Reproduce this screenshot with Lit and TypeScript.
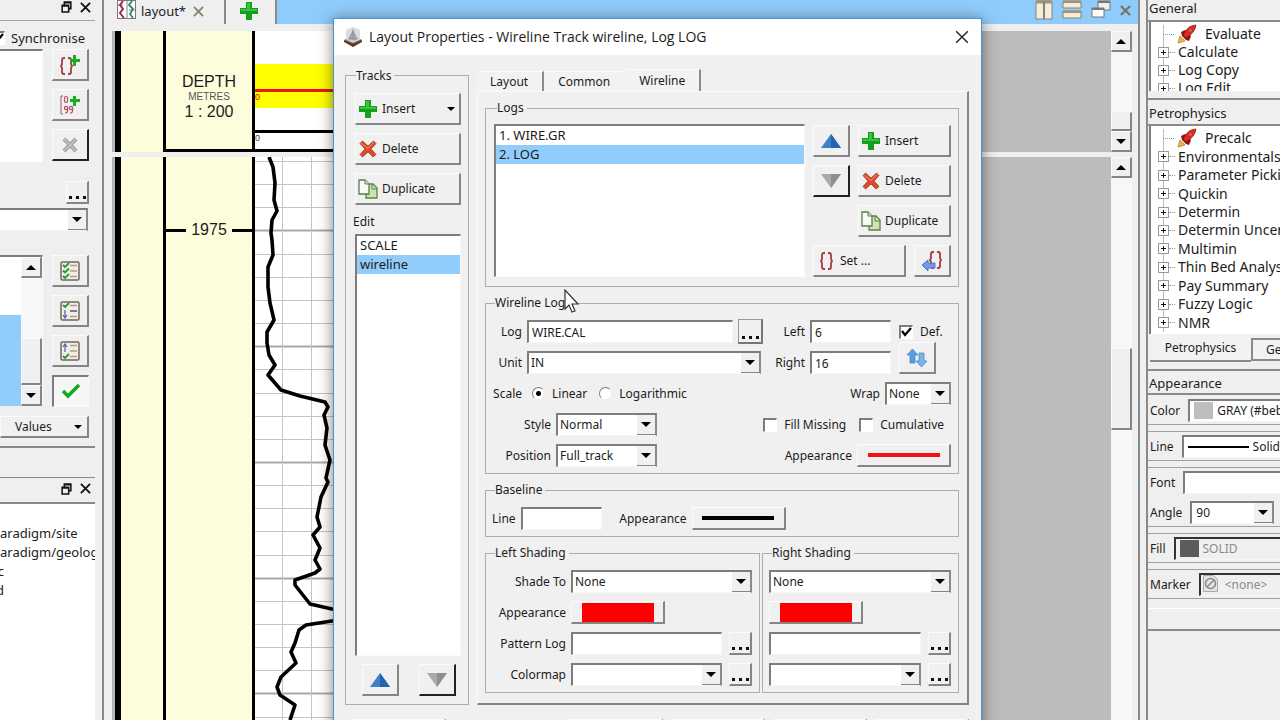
import { LitElement, html, css, svg, nothing, TemplateResult } from "lit";
import { customElement } from "lit/decorators.js";
import { classMap } from "lit/directives/class-map.js";

const plus = (s = 18) => html`<svg width=${s} height=${s} viewBox="0 0 18 18"><path d="M6 0h6v6h6v6h-6v6H6v-6H0V6h6z" fill="#13a01c"/><path d="M7 1h3v6h7v2H1V7h6z" fill="#3cc23f"/></svg>`;
const cross = html`<svg width="18" height="18" viewBox="0 0 18 18"><path d="M1 3.500 3.500 1 9 6l5.500-5L17 3.500 12 9l5 5.500-3 2.500-5-5-5.500 5L1 14.500 6 9z" fill="#dd4a2b" stroke="#a8381f" stroke-width=".8"/><path d="M2.500 3.500 9 8.500l5.500-6" stroke="#f0957a" fill="none"/></svg>`;
const pages = html`<svg width="20" height="20" viewBox="0 0 20 20"><path d="M8 5h7l4 4v10H8z" fill="#cfe3b0" stroke="#5d8448" stroke-width="1.300"/><path d="M14 5v5h5" fill="none" stroke="#5d8448"/><path d="M1 1h6l4 4v10H1z" fill="#f8fbf3" stroke="#5b7a52" stroke-width="1.300"/><path d="M7 1v4h4" fill="#dbe8ce" stroke="#5b7a52"/></svg>`;
const up = html`<svg width="20" height="14" viewBox="0 0 20 14"><path d="M10 0 20 14H0z" fill="#3b82c9"/><path d="M10 0 20 14H10z" fill="#2563ae"/></svg>`;
const down = html`<svg width="20" height="14" viewBox="0 0 20 14"><path d="M0 0h20L10 14z" fill="#a9a9a9"/><path d="M10 0h10L10 14z" fill="#8f8f8f"/></svg>`;
const bracePath = "M5 1H4Q2 1 2 3v4L1 9l1 2v4q0 2 2 2h1M8 1h1q2 0 2 2v4l1 2-1 2v4q0 2-2 2H8";
const braces = html`<svg width="13" height="18" viewBox="0 0 13 18"><path d=${bracePath} fill="none" stroke="#a83a42" stroke-width="1.800"/></svg>`;
const bracesPlus = html`<svg width="20" height="20" viewBox="0 0 20 20"><g transform="translate(0 2)"><path d=${bracePath} fill="none" stroke="#a83a42" stroke-width="1.800"/></g><path d="M13 0h3v4h4v3h-4v4h-3V7H10V4h3z" fill="#17ad22"/></svg>`;
const bracesArrow = html`<svg width="20" height="20" viewBox="0 0 20 20"><g transform="translate(7 0)"><path d=${bracePath} fill="none" stroke="#a83a42" stroke-width="1.800"/></g><path d="M0 14l6-5v3h7v5H6v3z" fill="#6f9bec" stroke="#4267c0" stroke-width=".8"/></svg>`;
const range = html`<svg width="20" height="20" viewBox="0 0 20 20"><path d="M3 1H1v18h2" fill="none" stroke="#b0525a"/><g fill="none" stroke="#b0525a" stroke-width="1.200"><rect x="4.500" y="1.500" width="3" height="6" rx="1.500"/><circle cx="6" cy="13" r="1.600"/><path d="M7.600 13v2.500q0 2.500-2.500 2.500"/><circle cx="11" cy="13" r="1.600"/><path d="M12.600 13v2.500q0 2.500-2.500 2.500"/></g><path d="M13 1h3v3h4v3h-4v4h-3V7h-3V4h3z" fill="#17ad22"/></svg>`;
const greyX = html`<svg width="16" height="16" viewBox="0 0 16 16"><path d="M2 2l12 12M14 2 2 14" stroke="#9c9c9c" stroke-width="4"/><path d="M2 2l12 12M14 2 2 14" stroke="#bdbdbd" stroke-width="2"/></svg>`;
const checklist = (n: number) => html`<svg width="20" height="20" viewBox="0 0 20 20"><rect x="1" y="1" width="18" height="18" rx="1.500" fill="#f3ece2" stroke="#6f665f" stroke-width="1.500"/><path d="M10 4.500h7M10 10h7M10 15.500h7" stroke="#a89e94" stroke-width="1.600"/><path d=${n === 0 ? "M3 4l2 2 4-4M3 9.500l2 2 4-4M3 15l2 2 4-4" : n === 1 ? "M3 4l2 2 4-4" : "M3 15l2 2 4-4"} fill="none" stroke="#1d9a3a" stroke-width="1.800"/>${n === 1 ? svg`<path d="M5 9v7M3 14l2 3 2-3M10 10h7" stroke="#5a68b8" stroke-width="1.300" fill="none"/>` : n === 2 ? svg`<path d="M5 11V4M3 6l2-3 2 3" stroke="#5a68b8" stroke-width="1.300" fill="none"/>` : nothing}</svg>`;
const tick = html`<svg width="18" height="15" viewBox="0 0 18 15"><path d="M1 7l5 5L17 1" fill="none" stroke="#14a822" stroke-width="3.500"/></svg>`;
const swap = html`<svg width="20" height="20" viewBox="0 0 20 20"><path d="M5.500 1 11 7H8v8H3V7H0z" fill="#5a9ee0" stroke="#3e7cc2" stroke-width=".7"/><path d="M14.500 19 9 13h3V5h5v8h3z" fill="#7ab6ec" stroke="#3e7cc2" stroke-width=".7"/></svg>`;
const tri = (dir: "up" | "down") => html`<svg width="10" height="5" viewBox="0 0 10 5"><path d=${dir === "up" ? "M5 0l5 5H0z" : "M0 0h10L5 5z"}/></svg>`;
const restore = html`<svg width="11" height="12" viewBox="0 0 10 11"><path d="M3 4V1h6v6H7M3 1.500h6M1 4h6v6H1zM1 4.500h6" fill="none" stroke="#111" stroke-width="1.400"/></svg>`;
const ex = (s: number, c: string, w: number) => html`<svg width=${s} height=${s} viewBox="0 0 12 12"><path d="M1 1l10 10M11 1 1 11" stroke=${c} stroke-width=${w}/></svg>`;
const rocket = html`<svg width="20" height="20" viewBox="0 0 20 20"><path d="M1 19l2-7 5 5z" fill="#e9b93a" stroke="#a97720" stroke-width=".7"/><path d="M4 8l4-2 6 6-2 5-3-1-4-4z" fill="#8f1410"/><path d="M19 1q-8 0-13 10l3 3Q18 9 19 1z" fill="#dc2a1e" stroke="#7d130f" stroke-width=".7"/><circle cx="13.500" cy="6.500" r="1.300" fill="#a9808a"/></svg>`;
const appIcon = html`<svg width="18" height="20" viewBox="0 0 18 20"><path d="M9 9l9 4-9 7-9-7z" fill="#8a5a3a"/><path d="M0 13l9 4 9-4v2l-9 5-9-5z" fill="#5a3a28"/><path d="M9 0l7 3v10l-7 3-7-3V3z" fill="#d4d9de" opacity=".9"/><path d="M9 2v11M9 4l-4 8h8z" stroke="#8a9098" stroke-width="1" fill="#a4abb2"/></svg>`;
const layoutIcon = html`<svg width="19" height="19" viewBox="0 0 19 19"><rect x=".5" y=".5" width="18" height="18" fill="#fff" stroke="#777"/><path d="M10 1v18M1 5h5M12 10h6" stroke="#888"/><path d="M6 1 3 5l3 4-3 4 4 5" fill="none" stroke="#a02842" stroke-width="2"/><path d="M15 1l-3 4 4 4-3 5 3 4" fill="none" stroke="#1f8f62" stroke-width="1.800"/></svg>`;
const splitV = html`<svg width="18" height="20" viewBox="0 0 18 20"><path d="M1 1h16v18H1z" fill="#f4ecdc" stroke="#8b8272"/><path d="M1 2h16" stroke="#a3946f" stroke-width="3"/><path d="M9 1v18" stroke="#8b8272" stroke-width="2"/></svg>`;
const splitH = html`<svg width="20" height="20" viewBox="0 0 20 20"><path d="M1 1h18v7H1zM1 11h18v7H1z" fill="#f4ecdc" stroke="#8b8272"/><path d="M1 2h18M1 12h18" stroke="#a3946f" stroke-width="2"/></svg>`;
const cascade = html`<svg width="20" height="18" viewBox="0 0 20 18"><path d="M7 1h12v9H7z" fill="#f2efe8" stroke="#777"/><path d="M7 2h12" stroke="#777" stroke-width="2"/><path d="M1 8h12v9H1z" fill="#fff" stroke="#777"/><path d="M1 9h12" stroke="#777" stroke-width="2"/></svg>`;
const noneIcon = html`<svg width="15" height="17" viewBox="0 0 15 17"><path d="M.5.500h10l4 4v12H.5z" fill="#e4e4e4" stroke="#aaa"/><circle cx="7.500" cy="8.500" r="5" fill="none" stroke="#888" stroke-width="1.500"/><path d="M4 12l7-7" stroke="#888" stroke-width="1.500"/></svg>`;

const curveA = "269,0 273,10 275,26 274,43 277,54 272,63 271,76 272,83 273,98 268,110 268,130 270,146 274,163 267,175 267,186 269,198 275,208 268,218 281,233 300,239 325,245 328,250 324,258 327,271 325,288 330,303 326,321 328,325 321,340 317,360 320,370 313,378 320,391 315,403 320,412 315,416 295,423 295,428 310,447 332,452 360,453";
const curveB = "360,461 332,464 306,468 299,473 295,486 291,495 296,506 281,520 277,530 280,538 295,548 290,563";

@customElement("app-root")
export class AppRoot extends LitElement {
  static styles = css`
    :host { display: block; position: relative; height: 100vh; min-height: 720px; overflow: hidden; background: #efefef; color: #1c1c1c; font: 12px/16px "Noto Sans", "Open Sans", sans-serif; }
    * { box-sizing: border-box; }
    svg { display: block; flex: none; }
    button, input, select { font: inherit; color: inherit; margin: 0; }
    ul { list-style: none; margin: 0; padding: 0; }
    .desk { display: flex; height: 100%; }
    .raised { display: flex; align-items: center; justify-content: center; padding: 0; background: #f0f0f0; border: solid; border-width: 1px 2px 2px 1px; border-color: #fbfbfb #858585 #858585 #fbfbfb; border-radius: 0; flex: none; }
    .dim { border-right-color: #222; border-bottom-color: #222; }
    .sq { width: 37px; height: 32px; }
    .txt { height: 32px; justify-content: flex-start; gap: 4px; padding: 1px 2px 0; }
    .txt .grow { flex: 1; text-align: left; }
    .txt .mini { width: 8px; height: 4px; margin-right: 2px; }
    .ico { display: flex; justify-content: center; width: 20px; flex: none; }
    .dots { width: 23px; height: 23px; align-items: flex-end; gap: 4px; padding-bottom: 3px; }
    .dots i { width: 3px; height: 3px; background: #111; }
    .wide { width: 25px; height: 25px; border-color: #999 #777 #777 #999; }
    .field, .combo { height: 23px; min-width: 0; background: #fff; border: solid; border-width: 2px 1px 1px 2px; border-color: #7d7d7d #f6f6f6 #f6f6f6 #7d7d7d; border-radius: 0; }
    .field { padding: 1px 3px 0; }
    .combo { display: flex; align-items: stretch; border-right: 2px solid #8a8a8a; }
    .combo select { flex: 1; min-width: 0; width: 0; appearance: none; border: 0; padding: 0 2px; background: transparent; border-radius: 0; }
    .combo .arrow { width: 18px; display: flex; align-items: center; justify-content: center; background: #f0f0f0; border: solid; border-width: 0 0 1px; border-color: #858585; }
    .list { background: #fff; border: solid; border-width: 2px 1px 1px 2px; border-color: #7d7d7d #fafafa #fafafa #7d7d7d; }
    .list li { height: 19px; line-height: 19px; padding: 0 3px; font-size: 13px; }
    .list .on { background: #91ccfb; }

    /* left dock */
    .left { width: 104px; flex: none; display: flex; flex-direction: column; border-right: 2px solid #8a8a8a; padding-right: 7px; }
    .dockhead { display: flex; justify-content: flex-end; align-items: center; gap: 8px; height: 21px; padding: 0 4px 6px 0; border-bottom: 1px solid #a0a0a0; flex: none; }
    .dockhead.low { height: 27px; padding-bottom: 3px; border-top: 1px solid #8a8a8a; border-bottom: 2px solid #8a8a8a; margin-top: 29px; }
    .sync { display: flex; align-items: center; gap: 6px; height: 20px; margin-top: 7px; font-size: 13px; }
    .sync input { margin-left: -9px; }
    .pair { display: flex; justify-content: space-between; padding-right: 6px; margin-top: 1px; }
    .pair.second { margin-top: 24px; }
    .stack { display: flex; flex-direction: column; gap: 8px; }
    .whitebox { width: 43px; height: 113px; background: #fff; border-top: 2px solid #7d7d7d; border-right: 1px solid #fafafa; }
    .more { display: flex; justify-content: flex-end; margin: 19px 6px 4px 0; }
    .leftcombo { margin: 0 7px 0 -6px; }
    .scrolled { display: flex; width: 43px; height: 151px; background: #fff; border-top: 2px solid #7d7d7d; border-right: 1px solid #fafafa; }
    .scrolled .rows { flex: 1; display: flex; align-items: flex-end; }
    .scrolled .sel { width: 100%; height: 91px; background: #91ccfb; }
    .sb { width: 21px; display: flex; flex-direction: column; background: #f7f7f7; flex: none; }
    .sb .raised { width: 100%; height: 21px; }
    .sb .gap { flex: 1; }
    .sb .thumb { height: 47px; }
    .pressed { border-color: #7d7d7d #fafafa #fafafa #7d7d7d; border-width: 2px 1px 1px 2px; background: #f6f6f6; }
    .values { height: 22px; margin: 9px 6px 0 0; justify-content: space-between; padding: 0 5px 0 14px; }
    .values svg { width: 8px; height: 4px; }
    .rule { border-top: 2px solid #8a8a8a; margin-top: 8px; }
    .files { flex: 1; background: #fff; padding-top: 20px; overflow: hidden; white-space: nowrap; font-size: 13px; }
    .files li { height: 19px; line-height: 19px; display: flex; }
    .files .cut { justify-content: flex-end; width: 4px; }

    /* centre */
    .centre { flex: 1; min-width: 0; display: flex; flex-direction: column; border-right: 2px solid #8a8a8a; }
    .tabs { display: flex; height: 24px; background: #8fcbfb; flex: none; }
    .tabs .lay { display: flex; align-items: flex-start; gap: 5px; width: 122px; padding: 0 0 0 13px; background: #efefef; border: 0; border-right: 2px solid #8a8a8a; font-size: 13px; line-height: 22px; }
    .tabs .lay .shut { margin: 6px 0 0 2px; }
    .tabs .add { width: 51px; display: flex; justify-content: center; padding: 2px 4px 0 0; background: #efefef; border: 0; border-right: 2px solid #8a8a8a; }
    .tabs .win { margin-left: auto; display: flex; gap: 9px; padding-right: 7px; }
    .tabs .win svg:last-child { margin-top: 5px; }
    .plot { display: flex; background: #bcbcbc; margin: 0 6px 0 8px; }
    .head { height: 121px; margin-top: 7px; flex: none; }
    .body { flex: 1; margin-top: 5px; min-height: 0; }
    .edge { width: 9px; border: solid; border-width: 0 6px 0 3px; border-color: #000 #000 #000 #b5b5b5; flex: none; }
    .lane { width: 42px; background: #fdfddc; flex: none; }
    .depth { width: 92px; background: #fdfddc; border: solid #000; border-width: 0 3px; flex: none; font-family: "Liberation Sans", Arial, sans-serif; text-align: center; }
    .head .depth { border-bottom: 3px solid #000; padding-top: 42px; font-size: 16px; line-height: 18px; }
    .head .depth small { display: block; font-size: 10px; line-height: 12px; color: #555; }
    .mark { display: flex; align-items: center; gap: 5px; margin-top: 63px; font-size: 16px; line-height: 20px; }
    .mark::before, .mark::after { content: ""; flex: 1; height: 3px; background: #000; }
    .log { width: 320px; background: #fff; flex: none; overflow: hidden; font: 9px/10px "Liberation Sans", Arial, sans-serif; }
    .head .log { border-bottom: 3px solid #000; padding-top: 33px; }
    .band { height: 44px; padding-top: 25px; background: #ff0; color: #c00; }
    .band div { border-top: 3px solid #ee1414; }
    .blk { border-top: 3px solid #000; margin-top: 22px; color: #444; }
    .plot .sb { margin-left: auto; }
    .plot .sb .long { height: 82px; }
    .plot .sb .short { height: 19px; border-top-color: #eee; }
    .off { height: 170px; }

    /* right dock */
    .right { width: 134px; margin-left: 6px; flex: none; border-left: 2px solid #8a8a8a; overflow: hidden; white-space: nowrap; font-size: 12px; }
    .cap { height: 22px; line-height: 17px; padding-left: 1px; font-size: 13px; border-bottom: 2px solid #8a8a8a; }
    .cap.mid { height: 28px; line-height: 26px; border-top: 2px solid #8a8a8a; margin-top: 7px; }
    .cap.low { height: 26px; line-height: 24px; border-top: 2px solid #8a8a8a; margin-top: 7px; font-size: 13px; }
    .tree { margin-left: 1px; background: #fff; border-left: 2px solid #7d7d7d; font-size: 14px; overflow: hidden; display: flex; flex-direction: column; padding: 3px 0 0 7px; }
    .tree.a { height: 69px; }
    .tree.b { height: 208px; padding-bottom: 2px; }
    .tree.b li { flex: 1; }
    .tree li { display: flex; align-items: center; height: 18px; flex: none; background: linear-gradient(#bbb, #bbb) 5px 0 / 1px 100% no-repeat; }
    .tree .box { flex: none; width: 11px; height: 11px; border: 1px solid #999; background: linear-gradient(#111, #111) 2px 4px / 5px 1px no-repeat, linear-gradient(#111, #111) 4px 2px / 1px 5px no-repeat, #fff; }
    .tree .stub { flex: none; width: 6px; margin-right: 3px; border-top: 1px dotted #999; }
    .tree .leaf { flex: none; width: 11px; margin-left: 5px; border-top: 1px dotted #999; }
    .tree svg { margin: 0 8px 0 3px; }
    .rtabs { display: flex; height: 28px; }
    .rtabs button { flex: none; border: 0; border-bottom: 2px solid #8a8a8a; background: #f2f2f2; width: 101px; padding: 2px 0 0; margin-left: 2px; height: 28px; font-size: 12px; text-align: center; }
    .rtabs button + button { margin: 4px 0 0; height: 23px; border: 2px solid #8a8a8a; width: 72px; padding: 0 0 0 13px; text-align: left; }
    .prop { display: flex; flex-direction: column; gap: 7px; padding: 3px 0 2px 2px; margin-top: 6px; border-top: 1px solid #a0a0a0; border-bottom: 1px solid #a0a0a0; }
    .prop.first { margin-top: 1px; border-top: 0; }
    .pr { display: flex; align-items: center; gap: 8px; height: 23px; width: 220px; }
    .pr .combo { flex: 1; }
    .pr .combo.angle { flex: none; width: 84px; }
    .pr .combo select { padding-left: 4px; }
    .pr .off2 { background: #f0f0f0; color: #8a8a8a; border-color: #333 #f6f6f6 #f6f6f6 #333; }
    .sw { width: 19px; height: 17px; margin: 1px 0 0 4px; background: #bebebe; flex: none; }
    .sw.dark { background: #5c5c5c; }
    .ln { width: 61px; height: 2px; margin: 9px 0 0 4px; background: #000; flex: none; }
    .endbar { height: 23px; margin-top: 9px; border-top: 1px solid #fff; border-bottom: 2px solid #8a8a8a; }

    /* dialog */
    .dialog { position: absolute; left: 333px; top: 18px; width: 649px; border: 1px solid #4695d6; background: #f0f0f0; box-shadow: 0 2px 14px rgba(0, 0, 0, .5); }
    .title { display: flex; align-items: center; gap: 7px; height: 36px; padding: 0 12px 0 10px; background: #fff; font: 14px/20px "Open Sans", "Noto Sans", sans-serif; }
    .title h1 { flex: 1; margin: 0; font: inherit; }
    .title button { border: 0; background: none; padding: 0; }
    .main { display: flex; gap: 8px; padding: 12px 12px 0 11px; }
    fieldset { margin: 0; padding: 9px 7px 6px 6px; border: 1px solid #adadad; min-width: 0; }
    legend { padding: 0 3px 0 0; margin-left: 3px; height: 16px; }
    .tracks { width: 124px; padding: 10px 7px 8px 9px; display: flex; flex-direction: column; }
    .tracks legend { margin-left: 1px; padding-top: 1px; }
    .tracks .cap2 { margin: 9px 0 4px -2px; }
    .tracks .list { flex: 1; }
    .arrows { display: flex; justify-content: space-between; padding: 8px 5px 0 7px; }
    .col { flex: 1; min-width: 0; padding-top: 2px; }
    .dtabs { display: flex; align-items: flex-end; height: 22px; }
    .dtabs button { height: 20px; padding: 0 14px; border: 0; border-top: 1px solid #fafafa; background: #f2f2f2; }
    .dtabs .first { padding-left: 13px; border-right: 2px solid #8a8a8a; }
    .dtabs .cur { height: 22px; border-right: 2px solid #8a8a8a; margin-left: 1px; }
    .panel { display: flex; flex-direction: column; gap: 8px; padding: 8px 8px 10px 7px; border: solid; border-width: 1px 2px 2px 1px; border-color: #fafafa #858585 #858585 #fafafa; }
    .logs { display: flex; gap: 8px; padding: 8px 7px 9px 8px; }
    .logs .list { flex: 1; height: 153px; }
    .ops { width: 138px; display: grid; grid-template-columns: 37px 1fr 37px; gap: 8px; align-content: end; }
    .ops .span { grid-column: 2 / 4; }
    .ops .solo { grid-column: 2 / 4; }
    .ops .set { grid-column: 1 / 3; }
    .form { display: flex; flex-direction: column; gap: 8px; }
    .r { display: flex; align-items: center; gap: 5px; height: 23px; }
    .r .field.fill, .r .combo.fill { flex: 1; }
    .r .unit { margin-right: 2px; }
    .l1 { width: 30px; text-align: right; flex: none; white-space: nowrap; }
    .l2 { width: 59px; text-align: right; flex: none; }
    .l3 { width: 37px; text-align: right; flex: none; }
    .l4 { width: 80px; text-align: right; flex: none; white-space: nowrap; }
    .w81 { width: 81px; }
    .tail { width: 55px; display: flex; align-items: center; gap: 7px; padding-left: 3px; flex: none; }
    .tail.end { align-self: flex-end; align-items: flex-end; }
    .push { margin-left: auto; }
    .flags { padding-right: 7px; }
    .c101 { width: 101px; }
    .c65 { width: 66px; }
    .app { width: 94px; height: 23px; }
    .app i { width: 72px; height: 4px; background: #ee1414; }
    .app .k { background: #000; }
    .app .fillred { height: 19px; background: #f00; }
    .opt { display: flex; align-items: center; gap: 7px; }
    .opt + .opt { margin-left: 8px; }
    input[type="checkbox"] { appearance: none; width: 14px; height: 14px; background: #fff; border: solid; border-width: 2px 1px 1px 2px; border-color: #7d7d7d #fff #fff #7d7d7d; flex: none; }
    input[type="checkbox"]:checked { background: #fff url('data:image/svg+xml,<svg xmlns="http://www.w3.org/2000/svg" viewBox="0 0 11 11"><path d="M1 4l3 4 6-7" fill="none" stroke="black" stroke-width="2.200"/></svg>') center / 11px 11px no-repeat; }
    input[type="radio"] { appearance: none; width: 13px; height: 13px; border-radius: 50%; background: #fff; border: 1px solid; border-color: #7d7d7d #eee #eee #7d7d7d; flex: none; }
    input[type="radio"]:checked { background: radial-gradient(circle, #000 0 2px, #fff 3px); }
    .radios { display: flex; gap: 4px; padding-left: 5px; }
    .shades { display: flex; gap: 2px; }
    .shades .ls { width: 275px; }
    .shades .rs { flex: 1; }
    .l5 { width: 74px; text-align: right; flex: none; }
    .shades .dots { margin-left: 2px; }
    .foot { display: flex; justify-content: space-between; gap: 8px; padding: 14px 12px 12px 18px; }
    .foot .raised { width: 94px; height: 30px; }
    .foot div { display: flex; gap: 8px; }
    .cursor { position: absolute; left: 230px; top: 270px; }
  `;

  private combo(id: string, value: string, cls = "", lead: unknown = nothing) {
    return html`<div class="combo ${cls}">${lead}<select id=${id} aria-label=${id}><option>${value}</option></select><span class="arrow">${tri("down")}</span></div>`;
  }
  private dots(cls = "") {
    return html`<button class="raised dots ${cls}"><i></i><i></i><i></i></button>`;
  }
  private act(icon: TemplateResult, label: string, cls = "", menu = false) {
    return html`<button class="raised txt ${cls}"><span class="ico">${icon}</span><span class="grow">${label}</span>${menu ? html`<svg class="mini" viewBox="0 0 10 5"><path d="M0 0h10L5 5z"/></svg>` : nothing}</button>`;
  }
  private list(items: string[], sel: number) {
    return html`<ul class="list" role="listbox">${items.map((t, i) => html`<li role="option" aria-selected=${i === sel} class=${classMap({ on: i === sel })}>${t}</li>`)}</ul>`;
  }
  private tree(cls: string, leaf: string, nodes: string[]) {
    return html`<ul class="tree ${cls}">
      <li><span class="leaf"></span>${rocket}${leaf}</li>
      ${nodes.map((n) => html`<li><span class="box"></span><span class="stub"></span>${n}</li>`)}
    </ul>`;
  }
  private shading(id: string, legend: string, labelled: boolean, cls: string) {
    const lab = (f: string, t: string) => (labelled ? html`<label class="l5" for=${id + f}>${t}</label>` : nothing);
    return html`<fieldset class="form ${cls}"><legend>${legend}</legend>
      <div class="r">${lab("to", "Shade To")}${this.combo(id + "to", "None", "fill")}</div>
      <div class="r">${lab("app", "Appearance")}<button class="raised app" id=${id + "app"}><i class="fillred"></i></button></div>
      <div class="r">${lab("pat", "Pattern Log")}<input class="field fill" id=${id + "pat"} />${this.dots()}</div>
      <div class="r">${lab("map", "Colormap")}${this.combo(id + "map", "", "fill")}${this.dots()}</div>
    </fieldset>`;
  }

  private leftDock() {
    return html`<aside class="left">
      <div class="dockhead">${restore}${ex(11, "#111", 2)}</div>
      <label class="sync"><input type="checkbox" checked />Synchronise</label>
      <div class="pair"><div class="whitebox"></div>
        <div class="stack"><button class="raised sq">${bracesPlus}</button><button class="raised sq">${range}</button><button class="raised sq dim">${greyX}</button></div>
      </div>
      <div class="more">${this.dots()}</div>
      ${this.combo("source", "", "leftcombo")}
      <div class="pair second">
        <div class="scrolled"><div class="rows"><div class="sel"></div></div>
          <div class="sb"><span class="raised">${tri("up")}</span><span class="gap"></span><span class="raised thumb"></span><span class="raised">${tri("down")}</span></div></div>
        <div class="stack">${[0, 1, 2].map((n) => html`<button class="raised sq">${checklist(n)}</button>`)}<button class="raised sq pressed">${tick}</button></div>
      </div>
      <button class="raised values"><span>Values</span>${tri("down")}</button>
      <div class="rule"></div>
      <div class="dockhead low">${restore}${ex(11, "#111", 2)}</div>
      <ul class="files"><li>aradigm/site</li><li>aradigm/geolog</li><li class="cut">c</li><li class="cut">d</li></ul>
    </aside>`;
  }

  private centre() {
    const lines = Array.from({ length: 40 }, (_, i) => 4 + Math.round(i * 23.15));
    return html`<main class="centre">
      <div class="tabs">
        <button class="lay">${layoutIcon}<span>layout*</span><span class="shut">${ex(11, "#8a8070", 2)}</span></button>
        <button class="add">${plus(18)}</button>
        <div class="win">${splitV}${splitH}${cascade}${ex(11, "#777064", 2.2)}</div>
      </div>
      <div class="plot head">
        <div class="edge"></div><div class="lane"></div>
        <div class="depth">DEPTH<small>METRES</small>1 : 200</div>
        <div class="log"><div class="band"><div>0</div></div><div class="blk">0</div></div>
        <div class="sb"><span class="raised">${tri("up")}</span><span class="gap"></span><span class="raised short"></span><span class="raised">${tri("down")}</span></div>
      </div>
      <div class="plot body">
        <div class="edge"></div><div class="lane"></div>
        <div class="depth"><div class="mark">1975</div></div>
        <div class="log"><svg width="320" height="900" viewBox="255 0 320 900">
          ${lines.map((y, i) => svg`<path d="M255 ${y + 0.5}h320" stroke=${i % 5 === 3 ? "#a8a8a8" : "#c4c4c4"} stroke-width=${i % 5 === 3 ? 2 : 1}/>`)}
          <path d="M282.500 0v900M311.500 0v900" stroke="#c4c4c4"/>
          <polyline points=${curveA} fill="none" stroke="#000" stroke-width="3.600" stroke-linejoin="round"/>
          <polyline points=${curveB} fill="none" stroke="#000" stroke-width="3.600" stroke-linejoin="round"/>
        </svg></div>
        <div class="sb"><span class="raised">${tri("up")}</span><span class="off"></span><span class="raised long"></span></div>
      </div>
    </main>`;
  }

  private rightDock() {
    return html`<aside class="right">
      <div class="cap">General</div>
      ${this.tree("a", "Evaluate", ["Calculate", "Log Copy", "Log Edit"])}
      <div class="cap mid">Petrophysics</div>
      ${this.tree("b", "Precalc", ["Environmentals", "Parameter Picking", "Quickin", "Determin", "Determin Uncertainty", "Multimin", "Thin Bed Analysis", "Pay Summary", "Fuzzy Logic", "NMR"])}
      <div class="rtabs"><button>Petrophysics</button><button>Geology</button></div>
      <div class="cap low">Appearance</div>
      <div class="prop first"><div class="pr"><label for="color">Color</label>${this.combo("color", "GRAY (#bebebe)", "", html`<span class="sw"></span>`)}</div></div>
      <div class="prop"><div class="pr"><label for="line">Line</label>${this.combo("line", "Solid", "", html`<span class="ln"></span>`)}</div></div>
      <div class="prop">
        <div class="pr"><label for="font">Font</label>${this.combo("font", "")}</div>
        <div class="pr"><label for="angle">Angle</label>${this.combo("angle", "90", "angle")}<span>Align</span></div>
      </div>
      <div class="prop"><div class="pr"><label for="fill">Fill</label>${this.combo("fill", "SOLID", "off2", html`<span class="sw dark"></span>`)}</div></div>
      <div class="prop"><div class="pr"><label for="marker">Marker</label>${this.combo("marker", "<none>", "off2", html`<span class="ico">${noneIcon}</span>`)}</div></div>
      <div class="endbar"></div>
    </aside>`;
  }

  private dialog() {
    return html`<section class="dialog" role="dialog">
      <header class="title">${appIcon}<h1>Layout Properties - Wireline Track wireline, Log LOG</h1><button>${ex(14, "#222", 1.2)}</button></header>
      <div class="main">
        <fieldset class="tracks"><legend>Tracks</legend>
          <div class="stack">${this.act(plus(), "Insert", "", true)}${this.act(cross, "Delete")}${this.act(pages, "Duplicate")}</div>
          <span class="cap2">Edit</span>
          ${this.list(["SCALE", "wireline"], 1)}
          <div class="arrows"><button class="raised sq">${up}</button><button class="raised sq dim">${down}</button></div>
        </fieldset>
        <div class="col">
          <nav class="dtabs"><button class="first">Layout</button><button>Common</button><button class="cur">Wireline</button></nav>
          <div class="panel">
            <fieldset class="logs"><legend>Logs</legend>
              ${this.list(["1. WIRE.GR", "2. LOG"], 1)}
              <div class="ops">
                <button class="raised sq">${up}</button>${this.act(plus(), "Insert", "span")}
                <button class="raised sq dim">${down}</button>${this.act(cross, "Delete", "span")}
                ${this.act(pages, "Duplicate", "solo")}
                ${this.act(braces, "Set ...", "set")}<button class="raised sq">${bracesArrow}</button>
              </div>
            </fieldset>
            <fieldset class="form"><legend>Wireline Log</legend>
              <div class="r"><label class="l1" for="log">Log</label><input class="field fill" id="log" value="WIRE.CAL" />${this.dots("wide")}
                <label class="l3" for="lo">Left</label><input class="field w81" id="lo" value="6" />
                <label class="tail"><input type="checkbox" checked />Def.</label></div>
              <div class="r"><label class="l1" for="unit">Unit</label>${this.combo("unit", "IN", "fill unit")}
                <label class="l3" for="hi">Right</label><input class="field w81" id="hi" value="16" />
                <span class="tail end"><button class="raised sq">${swap}</button></span></div>
              <div class="r"><span class="l1">Scale</span><span class="radios"><label class="opt"><input type="radio" name="scale" checked />Linear</label><label class="opt"><input type="radio" name="scale" />Logarithmic</label></span>
                <label class="push" for="wrap">Wrap</label>${this.combo("wrap", "None", "c65")}</div>
              <div class="r flags"><label class="l2" for="style">Style</label>${this.combo("style", "Normal", "c101")}
                <label class="opt push"><input type="checkbox" />Fill Missing</label><label class="opt"><input type="checkbox" />Cumulative</label></div>
              <div class="r"><label class="l2" for="position">Position</label>${this.combo("position", "Full_track", "c101")}
                <label class="push" for="wapp">Appearance</label><button class="raised app" id="wapp"><i></i></button></div>
            </fieldset>
            <fieldset class="form"><legend>Baseline</legend>
              <div class="r"><label for="base">Line</label><input class="field w81" id="base" /><label class="l4" for="bapp">Appearance</label><button class="raised app" id="bapp"><i class="k"></i></button></div>
            </fieldset>
            <div class="shades">${this.shading("l", "Left Shading", true, "ls")}${this.shading("r", "Right Shading", false, "rs")}</div>
          </div>
        </div>
      </div>
      <footer class="foot"><button class="raised"></button><div><button class="raised"></button><button class="raised"></button><button class="raised"></button><button class="raised"></button></div></footer>
      <svg class="cursor" width="16" height="24" viewBox="0 0 16 24"><path d="M1 1v19l4-4 3 7 3-1-3-7h6z" fill="#fff" stroke="#333" stroke-width="1.200"/></svg>
    </section>`;
  }

  render() {
    return html`<div class="desk">${this.leftDock()}${this.centre()}${this.rightDock()}</div>${this.dialog()}`;
  }
}
